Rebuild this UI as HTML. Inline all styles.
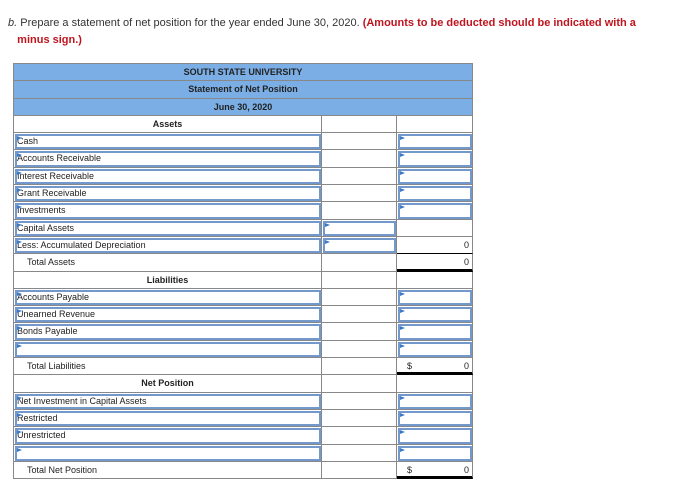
<!DOCTYPE html>
<html><head><style>
body{margin:0;width:684px;height:491px;background:#fff;font-family:"Liberation Sans",sans-serif;position:relative;overflow:hidden}
.q{position:absolute;left:8px;top:15px;font-size:11px;color:#333;line-height:17px;width:680px}
.q b{color:#c0141e}
.g{position:absolute;left:13px;top:63px;display:grid;grid-template-columns:308px 75px 76px;grid-template-rows:repeat(24,17.3px);border-left:1px solid #888;border-top:1px solid #888;box-sizing:border-box;width:460px}
.g>div{border-right:1px solid #888;border-bottom:1px solid #888;box-sizing:border-box;position:relative;font-size:9px;color:#222;line-height:16px;white-space:nowrap}
.h{grid-column:1/4;background:#7aaee5;text-align:center;font-weight:bold;font-size:9px}
.s{text-align:center;font-weight:bold}
.i::after{content:"";position:absolute;left:1px;top:1px;right:0;bottom:0;border:2px solid #7399cc}
.i::before{content:"";position:absolute;left:3px;top:3px;border-left:5px solid #3d79c7;border-top:2px solid transparent;border-bottom:2px solid transparent;z-index:2}
.l{padding-left:3px}
.t{padding-left:13px}
.r{text-align:right;padding-right:3px}
.bb{border-bottom:3px solid #000!important}
.bt{border-top:1px solid #000}
.d{position:absolute;left:10px}
</style></head><body>
<div class="q"><i>b.</i> Prepare a statement of net position for the year ended June 30, 2020. <b>(Amounts to be deducted should be indicated with a<br>&nbsp;&nbsp;&nbsp;minus sign.)</b></div>
<div class="g">
<div class="h">SOUTH STATE UNIVERSITY</div>
<div class="h">Statement of Net Position</div>
<div class="h">June 30, 2020</div>
<div class="s">Assets</div><div></div><div></div>
<div class="i l">Cash</div><div></div><div class="i"></div>
<div class="i l">Accounts Receivable</div><div></div><div class="i"></div>
<div class="i l">Interest Receivable</div><div></div><div class="i"></div>
<div class="i l">Grant Receivable</div><div></div><div class="i"></div>
<div class="i l">Investments</div><div></div><div class="i"></div>
<div class="i l">Capital Assets</div><div class="i"></div><div></div>
<div class="i l">Less: Accumulated Depreciation</div><div class="i"></div><div class="r" style="border-bottom:1px solid #000">0</div>
<div class="t">Total Assets</div><div></div><div class="r bb">0</div>
<div class="s">Liabilities</div><div></div><div></div>
<div class="i l">Accounts Payable</div><div></div><div class="i"></div>
<div class="i l">Unearned Revenue</div><div></div><div class="i"></div>
<div class="i l">Bonds Payable</div><div></div><div class="i"></div>
<div class="i l"></div><div></div><div class="i"></div>
<div class="t">Total Liabilities</div><div></div><div class="r bb"><span class="d">$</span>0</div>
<div class="s">Net Position</div><div></div><div></div>
<div class="i l">Net Investment in Capital Assets</div><div></div><div class="i"></div>
<div class="i l">Restricted</div><div></div><div class="i"></div>
<div class="i l">Unrestricted</div><div></div><div class="i"></div>
<div class="i l"></div><div></div><div class="i"></div>
<div class="t">Total Net Position</div><div></div><div class="r bb"><span class="d">$</span>0</div>
</div>
</body></html>
